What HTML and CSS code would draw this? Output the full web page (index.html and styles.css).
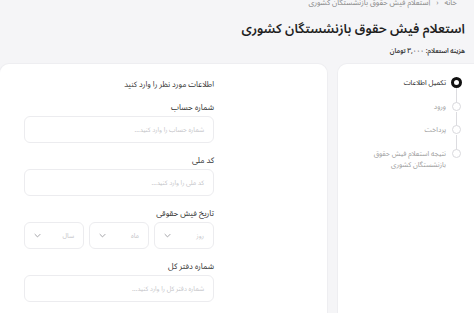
FILE: index.html
```html
<!DOCTYPE html>
<html lang="fa" dir="rtl">
<head>
<meta charset="utf-8">
<link rel="stylesheet" href="styles.css">
</head>
<body>
<div class="page">
  <header class="head">
    <div class="crumbs"><span>خانه</span><span class="sep">&lsaquo;</span><span>استعلام فیش حقوق بازنشستگان کشوری</span></div>
    <h1 class="title">استعلام فیش حقوق بازنشستگان کشوری</h1>
    <div class="fee">هزینه استعلام: ۳,۰۰۰ تومان</div>
  </header>
  <div class="main">
    <aside class="card steps">
      <div class="step active"><span class="dot"></span><span class="txt">تکمیل اطلاعات</span></div>
      <div class="step"><span class="dot"></span><span class="txt">ورود</span></div>
      <div class="step"><span class="dot"></span><span class="txt">پرداخت</span></div>
      <div class="step last"><span class="dot"></span><span class="txt">نتیجه استعلام فیش حقوق بازنشستگان کشوری</span></div>
    </aside>
    <section class="card form">
      <p class="intro">اطلاعات مورد نظر را وارد کنید</p>
      <div class="field">
        <label class="lbl">شماره حساب</label>
        <div class="input">شماره حساب را وارد کنید...</div>
      </div>
      <div class="field">
        <label class="lbl">کد ملی</label>
        <div class="input">کد ملی را وارد کنید...</div>
      </div>
      <div class="field">
        <label class="lbl">تاریخ فیش حقوقی</label>
        <div class="selects">
          <div class="select"><span>روز</span><svg viewBox="0 0 10 6" class="chev"><path d="M1 1l4 4 4-4"/></svg></div>
          <div class="select"><span>ماه</span><svg viewBox="0 0 10 6" class="chev"><path d="M1 1l4 4 4-4"/></svg></div>
          <div class="select"><span>سال</span><svg viewBox="0 0 10 6" class="chev"><path d="M1 1l4 4 4-4"/></svg></div>
        </div>
      </div>
      <div class="field">
        <label class="lbl">شماره دفتر کل</label>
        <div class="input">شماره دفتر کل را وارد کنید...</div>
      </div>
    </section>
  </div>
</div>
</body>
</html>
```
FILE: styles.css
```css
html, body {
  margin: 0;
  padding: 0;
}
body {
  background: #f5f5f7;
  font-family: "Noto Sans Arabic", "Vazirmatn", "Noto Naskh Arabic", "DejaVu Sans", sans-serif;
  color: #2b2b2b;
  width: 474px;
  height: 313px;
  overflow: hidden;
}
.page {
  direction: rtl;
}
.head {
  padding: 0 9px 0 0;
  height: 66px;
}
.crumbs {
  font-size: 7.6px;
  color: #888;
  margin-top: -2px;
  height: 11px;
  line-height: 11px;
  display: flex;
  gap: 6px;
  padding-right: 8px;
}
.title {
  font-size: 13px;
  font-weight: 600;
  margin: 9px 0 0;
  line-height: 22px;
  color: #1f1f1f;
}
.fee {
  font-size: 6.5px;
  font-weight: 600;
  margin-top: 4px;
  color: #333;
}
.main {
  display: flex;
  gap: 11px;
  margin-right: -14px;
}
.card {
  background: #fff;
  border-radius: 9px;
  box-shadow: 0 0 0 1px #eeeef1;
}
.steps {
  width: 150px;
  flex: none;
  padding: 11px 0 0 0;
  height: 260px;
  box-sizing: border-box;
}
.step {
  display: flex;
  align-items: flex-start;
  gap: 6px;
  padding-right: 27px;
  position: relative;
  height: 23.5px;
}
.step .dot {
  flex: none;
  width: 9px;
  height: 9px;
  border-radius: 50%;
  border: 1px solid #d9d9dd;
  box-sizing: border-box;
  background: #fff;
  margin-top: 3px;
  position: relative;
  z-index: 1;
}
.step.active .dot {
  border: 3px solid #111;
  width: 11px;
  height: 11px;
  margin-top: 2px;
  margin-right: -1px;
  margin-left: -1px;
}
.step:not(.last)::after {
  content: "";
  position: absolute;
  right: 31px;
  top: 13px;
  height: 19px;
  width: 1px;
  background: #dcdce0;
}
.step .txt {
  font-size: 7px;
  color: #9a9a9a;
  line-height: 11px;
  padding-top: 2px;
  width: 90px;
}
.step.active .txt {
  color: #222;
}
.form {
  width: 327px;
  flex: none;
  padding: 15px 113px 0 24px;
  box-sizing: border-box;
  height: 260px;
}
.intro {
  font-size: 7.8px;
  margin: 0 0 11px;
  line-height: 12px;
  color: #333;
}
.field {
  margin-bottom: 12px;
}
.lbl {
  display: block;
  font-size: 8px;
  line-height: 12px;
  color: #333;
  margin-bottom: 2px;
}
.input {
  height: 27px;
  border: 1px solid #ececef;
  border-radius: 6px;
  box-sizing: border-box;
  font-size: 6.5px;
  color: #c4c4c8;
  display: flex;
  align-items: center;
  padding: 0 9px;
}
.selects {
  display: flex;
  gap: 5px;
}
.select {
  flex: 1;
  height: 27px;
  border: 1px solid #ececef;
  border-radius: 6px;
  box-sizing: border-box;
  font-size: 6.5px;
  color: #c4c4c8;
  display: flex;
  align-items: center;
  justify-content: space-between;
  padding: 0 9px;
}
.chev {
  width: 7px;
  height: 5px;
  fill: none;
  stroke: #9a9aa0;
  stroke-width: 1.3;
}
```
